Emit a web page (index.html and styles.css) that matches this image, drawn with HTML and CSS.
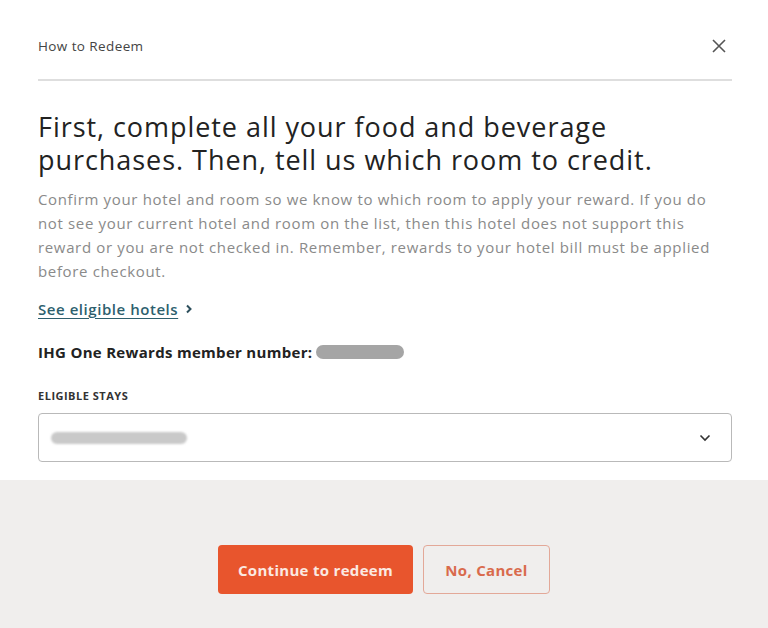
FILE: index.html
```html
<!DOCTYPE html>
<html>
<head>
<meta charset="utf-8">
<link rel="stylesheet" href="styles.css">
</head>
<body>
<div class="modal">
  <div class="content">
    <div class="header">
      <span class="title">How to Redeem</span>
      <svg class="close" width="14" height="14" viewBox="0 0 14 14"><path d="M1 1L13 13M13 1L1 13" stroke="#555" stroke-width="1.6" fill="none"/></svg>
    </div>
    <h1>First, complete all your food and beverage purchases. Then, tell us which room to credit.</h1>
    <p class="desc">Confirm your hotel and room so we know to which room to apply your reward. If you do not see your current hotel and room on the list, then this hotel does not support this reward or you are not checked in. Remember, rewards to your hotel bill must be applied before checkout.</p>
    <a class="link" href="#"><span class="u">See eligible hotels</span> <svg width="8" height="10" viewBox="0 0 8 10"><path d="M2 1.5L5.5 5L2 8.5" stroke="#2d4f5c" stroke-width="2" fill="none"/></svg></a>
    <div class="member">IHG One Rewards member number: <span class="redact"></span></div>
    <div class="label">ELIGIBLE STAYS</div>
    <div class="select">
      <span class="blur"></span>
      <svg width="12" height="8" viewBox="0 0 12 8"><path d="M1.5 1.5L6 6L10.5 1.5" stroke="#333" stroke-width="1.6" fill="none"/></svg>
    </div>
  </div>
  <div class="footer">
    <button class="btn primary">Continue to redeem</button>
    <button class="btn secondary">No, Cancel</button>
  </div>
</div>
</body>
</html>
```
FILE: styles.css
```css
html, body { margin: 0; padding: 0; background: #fff; }
body { font-family: "Open Sans", sans-serif; width: 768px; height: 628px; overflow: hidden; }
.modal { display: flex; flex-direction: column; height: 628px; }
.content { padding: 0 36px 0 38px; flex: none; height: 480px; box-sizing: border-box; }
.header { display: flex; justify-content: space-between; height: 81px; padding-top: 28px; padding-bottom: 6px; border-bottom: 2px solid #dedede; padding-right: 6px; box-sizing: border-box; align-items: flex-start; }
.title { font-size: 13.5px; letter-spacing: 0.4px; color: #444; line-height: 18px; margin-top: 9px; }
.close { margin-top: 11px; }
h1 { margin: 29px 0 0; font-weight: 400; font-size: 27px; line-height: 33px; color: #222; letter-spacing: 0.95px; }
.desc { margin: 11px 0 0; font-size: 15px; line-height: 24px; color: #8a8a8a; letter-spacing: 0.65px; }
.link { display: inline-flex; align-items: center; gap: 7px; margin-top: 16px; font-size: 15px; color: #2d5f6e; text-decoration: none; font-weight: 600; letter-spacing: 0.55px; }
.link .u { text-decoration: underline; text-underline-offset: 3px; }
.member { margin-top: 22px; font-size: 15px; font-weight: 700; color: #222; display: flex; align-items: center; gap: 4px; letter-spacing: 0.3px; }
.redact { display: inline-block; width: 88px; height: 14px; background: #8e8e8e; border-radius: 7px; opacity: 0.8; }
.label { margin-top: 26px; font-size: 11px; font-weight: 700; color: #333; letter-spacing: 0.5px; }
.select { margin-top: 10px; height: 49px; border: 1px solid #b9b9b9; border-radius: 4px; display: flex; align-items: center; justify-content: space-between; padding: 0 20px 0 12px; box-sizing: border-box; }
.blur { display: inline-block; width: 136px; height: 12px; background: #c9c9c9; border-radius: 6px; filter: blur(1px); }
.footer { flex: 1; background: #f0eeed; display: flex; justify-content: center; align-items: flex-start; gap: 10px; padding-top: 65px; }
.btn { height: 49px; border-radius: 4px; font-family: "Open Sans", sans-serif; font-size: 15px; font-weight: 700; cursor: pointer; box-sizing: border-box; letter-spacing: 0.3px; }
.primary { width: 195px; background: #e8552d; color: #fbe9e2; border: none; }
.secondary { width: 127px; background: transparent; color: #d96a4c; border: 1px solid #e3a898; }
```
